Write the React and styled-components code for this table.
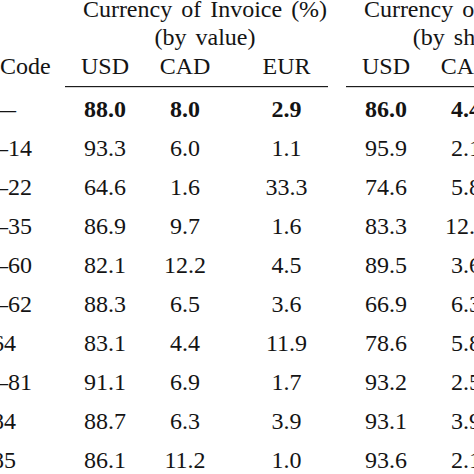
import React from "react";
import styled, { createGlobalStyle } from "styled-components";

const Global = createGlobalStyle`
  html, body { margin: 0; padding: 0; background: #ffffff; }
  body { overflow: hidden; }
`;

const Page = styled.div`
  width: 474px;
  height: 474px;
  overflow: hidden;
  background: #ffffff;
  color: #141414;
  font-family: "Liberation Serif", "Times New Roman", serif;
  font-size: 24px;
`;

const Table = styled.div`
  display: grid;
  grid-template-columns: 65px 80px 80px 103px 18px 80px 80px 103px;
  margin-top: -5px;
  width: max-content;
`;

const GroupTitle = styled.div`
  grid-column: ${(p) => p.$col} / span 3;
  height: ${(p) => p.$h}px;
  line-height: ${(p) => p.$h}px;
  padding-left: 17px;
  text-align: center;
  white-space: nowrap;
  word-spacing: 3px;
`;

const Cell = styled.div`
  grid-column: ${(p) => p.$col};
  height: ${(p) => p.$h}px;
  line-height: ${(p) => p.$h}px;
  padding-left: ${(p) => p.$pad || 0}px;
  text-align: ${(p) => (p.$left ? "left" : "center")};
  text-indent: ${(p) => p.$indent || 0}px;
  font-weight: ${(p) => (p.$bold ? 700 : 400)};
  white-space: nowrap;
  overflow: visible;
`;

const RuleSlot = styled.div`
  grid-column: ${(p) => p.$col} / span 3;
  height: 8px;
  display: flex;
  flex-direction: column;
  padding-top: 5px;
  box-sizing: border-box;
`;

const Rule = styled.div`
  height: 1px;
  background: #1c1c1c;
  box-shadow: 0 0.5px 0 rgba(0, 0, 0, 0.35);
`;

const Spacer = styled.div`
  grid-column: ${(p) => p.$col};
  height: ${(p) => p.$h}px;
`;

const rows = [
  { code: "—", indent: -8, v: ["88.0", "8.0", "2.9", "86.0", "4.4", "9.6"], bold: true },
  { code: "–14", indent: -4, v: ["93.3", "6.0", "1.1", "95.9", "2.1", "2.0"] },
  { code: "–22", indent: -4, v: ["64.6", "1.6", "33.3", "74.6", "5.8", "19.6"] },
  { code: "–35", indent: -4, v: ["86.9", "9.7", "1.6", "83.3", "12.7", "4.0"] },
  { code: "–60", indent: -4, v: ["82.1", "12.2", "4.5", "89.5", "3.6", "6.9"] },
  { code: "–62", indent: -4, v: ["88.3", "6.5", "3.6", "66.9", "6.3", "26.8"] },
  { code: "64", indent: -8, v: ["83.1", "4.4", "11.9", "78.6", "5.8", "15.6"] },
  { code: "–81", indent: -4, v: ["91.1", "6.9", "1.7", "93.2", "2.5", "4.3"] },
  { code: "84", indent: -8, v: ["88.7", "6.3", "3.9", "93.1", "3.9", "3.0"] },
  { code: "85", indent: -8, v: ["86.1", "11.2", "1.0", "93.6", "2.1", "4.3"] },
];

const valueCols = [2, 3, 4, 6, 7, 8];
const pads = { 4: 20, 8: 20 };

export default function App() {
  return (
    <Page>
      <Global />
      <Table>
        <Spacer $col={1} $h={28} />
        <GroupTitle $col={2} $h={28}>Currency of Invoice (%)</GroupTitle>
        <Spacer $col={5} $h={28} />
        <GroupTitle $col={6} $h={28}>Currency of Invoice (%)</GroupTitle>

        <Spacer $col={1} $h={29} />
        <GroupTitle $col={2} $h={29}>(by value)</GroupTitle>
        <Spacer $col={5} $h={29} />
        <GroupTitle $col={6} $h={29}>(by shipments)</GroupTitle>

        <Cell $col={1} $h={29} $left>Code</Cell>
        {["USD", "CAD", "EUR", "USD", "CAD", "EUR"].map((t, i) => (
          <Cell key={i} $col={valueCols[i]} $h={29} $pad={pads[valueCols[i]]}>
            {t}
          </Cell>
        ))}

        <Spacer $col={1} $h={8} />
        <RuleSlot $col={2}><Rule /></RuleSlot>
        <Spacer $col={5} $h={8} />
        <RuleSlot $col={6}><Rule /></RuleSlot>

        {rows.map((r, ri) => {
          const h = ri === 0 ? 40 : 39;
          return (
            <React.Fragment key={ri}>
              <Cell $col={1} $h={h} $left $indent={r.indent}>
                {r.code}
              </Cell>
              {r.v.map((val, i) => (
                <Cell
                  key={i}
                  $col={valueCols[i]}
                  $h={h}
                  $pad={pads[valueCols[i]]}
                  $bold={r.bold}
                >
                  {val}
                </Cell>
              ))}
            </React.Fragment>
          );
        })}
      </Table>
    </Page>
  );
}
